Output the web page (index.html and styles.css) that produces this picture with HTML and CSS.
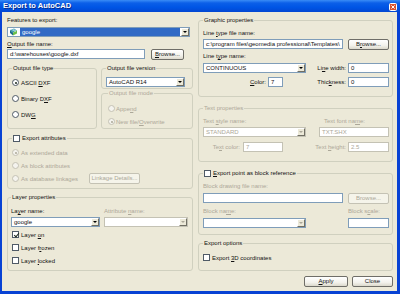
FILE: index.html
```html
<!DOCTYPE html>
<html lang="en">
<head>
    <meta charset="UTF-8">
    <title>AutoCAD export dialog</title>
    <link rel="stylesheet" href="styles.css">
</head>
<body>
<div class="window">
    <div class="titlebar">
        <span class="caption">Export to AutoCAD</span>
        <svg class="close-btn" width="8" height="8" viewBox="0 0 8 8">
            <rect x="0.5" y="0.5" width="7" height="7" rx="1" fill="#D8522F" stroke="#fff"/>
            <path d="M2.4 2.4 L5.6 5.6 M5.6 2.4 L2.4 5.6" stroke="#fff" stroke-width="1"/>
        </svg>
    </div>

    <div class="client">
        <div class="columns">
            <!-- Left column -->
            <div class="col-left">
                <span class="lbl">Features to export:</span>
                <div class="combo mt3">
                    <svg class="feat-icon" width="9" height="8" viewBox="0 0 9 8">
                        <path d="M1 2 L5 0.5 L8 2.5 L4 4.5 Z" fill="#3A9FB0"/>
                        <path d="M1 2 L4 4.5 L4 7.5 L1 5 Z" fill="#1F6C8C"/>
                        <path d="M4 4.5 L8 2.5 L8 5.5 L4 7.5 Z" fill="#6CC04A"/>
                        <path d="M2.5 1.5 L6.5 3.5 M4 1 L7 3" stroke="#fff" stroke-width="0.5"/>
                    </svg>
                    <span class="combo-text selected">google</span>
                    <span class="drop"></span>
                </div>

                <span class="lbl mt4"><u>O</u>utput file name:</span>
                <div class="row mt1">
                    <span class="edit w138">d:\warehouses\google.dxf</span>
                    <span class="btn w33"><u>B</u>rowse...</span>
                </div>

                <div class="group-row">
                    <fieldset class="group type-group">
                        <legend>Output file type</legend>
                        <div class="opt mt7"><span class="radio checked"></span><span>ASCII <u>D</u>XF</span></div>
                        <div class="opt mt9"><span class="radio"></span><span>Binary D<u>X</u>F</span></div>
                        <div class="opt mt9"><span class="radio"></span><span>DW<u>G</u></span></div>
                    </fieldset>
                    <div class="group-stack">
                        <fieldset class="group version-group">
                            <legend>Output file version</legend>
                            <div class="combo w79">
                                <span class="combo-text">AutoCAD R14</span>
                                <span class="drop"></span>
                            </div>
                        </fieldset>
                        <fieldset class="group mode-group disabled">
                            <legend>Output file mode</legend>
                            <div class="opt mt8"><span class="radio"></span><span>Appe<u>n</u>d</span></div>
                            <div class="opt mt6"><span class="radio checked"></span><span>New file/<u>O</u>verwrite</span></div>
                        </fieldset>
                    </div>
                </div>

                <fieldset class="group attr-group">
                    <legend><span class="check"></span><span>Export attributes</span></legend>
                    <div class="opt disabled mt7"><span class="radio checked"></span><span>As extended data</span></div>
                    <div class="opt disabled mt6"><span class="radio"></span><span>As block attributes</span></div>
                    <div class="opt disabled mt6">
                        <span class="opt-main"><span class="radio"></span><span>As database linkages</span></span>
                        <span class="btn w51 off">Linkage Details...</span>
                    </div>
                </fieldset>

                <fieldset class="group layer-group">
                    <legend>Layer properties</legend>
                    <div class="layer-grid mt7">
                        <span class="lbl">La<u>y</u>er name:</span>
                        <span class="lbl off">Attribute <u>n</u>ame:</span>
                    </div>
                    <div class="layer-grid mt2">
                        <div class="combo">
                            <span class="combo-text">google</span>
                            <span class="drop"></span>
                        </div>
                        <div class="combo off">
                            <span class="combo-text"></span>
                            <span class="drop"></span>
                        </div>
                    </div>
                    <div class="opt ml1 mt4"><span class="check checked"></span><span>Layer <u>o</u>n</span></div>
                    <div class="opt ml1 mt6"><span class="check"></span><span>Layer f<u>r</u>ozen</span></div>
                    <div class="opt ml1 mt6"><span class="check"></span><span>Layer <u>l</u>ocked</span></div>
                </fieldset>
            </div>

            <!-- Right column -->
            <div class="col-right">
                <fieldset class="group graphic-group">
                    <legend>Graphic properties</legend>
                    <span class="lbl mt6">Line <u>t</u>ype file name:</span>
                    <div class="row spread mt2">
                        <span class="edit w140">c:\program files\geomedia professional\Templates\</span>
                        <span class="btn w41">B<u>r</u>owse...</span>
                    </div>
                    <span class="lbl mt3">Line t<u>y</u>pe name:</span>
                    <div class="row mt3">
                        <div class="combo w103">
                            <span class="combo-text">CONTINUOUS</span>
                            <span class="drop"></span>
                        </div>
                        <span class="side-lbl">Li<u>n</u>e width:</span>
                        <span class="edit w41">0</span>
                    </div>
                    <div class="row mt4">
                        <span class="side-lbl w65"><u>C</u>olor:</span>
                        <span class="edit w15">7</span>
                        <span class="side-lbl">Thic<u>k</u>ness:</span>
                        <span class="edit w41">0</span>
                    </div>
                </fieldset>

                <fieldset class="group text-group disabled">
                    <legend>Text properties</legend>
                    <div class="text-grid mt6">
                        <span class="lbl">Text <u>s</u>tyle name:</span>
                        <span class="lbl pl5">Text font na<u>m</u>e:</span>
                    </div>
                    <div class="row spread mt2">
                        <div class="combo w103 off">
                            <span class="combo-text">STANDARD</span>
                            <span class="drop"></span>
                        </div>
                        <span class="edit w70 off">TXT.SHX</span>
                    </div>
                    <div class="row mt5">
                        <span class="side-lbl w40">Te<u>x</u>t color:</span>
                        <span class="edit w40 off">7</span>
                        <span class="side-lbl">Text <u>h</u>eight:</span>
                        <span class="edit w41 off">2.5</span>
                    </div>
                </fieldset>

                <fieldset class="group block-group">
                    <legend><span class="check"></span><span><u>E</u>xport point as block reference</span></legend>
                    <span class="lbl off mt6">Block drawing file name:</span>
                    <div class="row spread mt3">
                        <span class="edit w140"></span>
                        <span class="btn w41 off">Browse...</span>
                    </div>
                    <div class="row mt4">
                        <span class="lbl off grow">Block na<u>m</u>e:</span>
                        <span class="lbl off w41">Block s<u>c</u>ale:</span>
                    </div>
                    <div class="row spread mt3">
                        <div class="combo w103">
                            <span class="combo-text"></span>
                            <span class="drop off"></span>
                        </div>
                        <span class="edit w41"></span>
                    </div>
                </fieldset>

                <fieldset class="group options-group">
                    <legend>Export options</legend>
                    <div class="opt mt7"><span class="check"></span><span>Export <u>3</u>D coordinates</span></div>
                </fieldset>
            </div>
        </div>

        <div class="actions">
            <span class="btn w44"><u>A</u>pply</span>
            <span class="btn w41">Close</span>
        </div>
    </div>
</div>
</body>
</html>
```

FILE: styles.css
```css
/* Export to AutoCAD dialog, XP look */

* {
    box-sizing: border-box;
}

body {
    margin: 0;
    font-family: "Liberation Sans", Arial, sans-serif;
    font-size: 6px;
    color: #111;
}

.window {
    width: 400px;
    height: 294px;
    background: #0842D4;
    display: flex;
    flex-direction: column;
}

.titlebar {
    height: 12px;
    background: linear-gradient(to bottom, #3A8CF6 0%, #0C5FE8 25%, #0055E5 60%, #0347D2 100%);
    position: relative;
    padding: 1px 0 0 3px;
    text-align: left;
}

.caption {
    display: inline-block;
    color: #fff;
    font-weight: bold;
    font-size: 7.5px;
    line-height: 10px;
    white-space: nowrap;
    text-shadow: 1px 1px 0 #0A2E8C;
}

/* sits over the right end of the title bar */
.close-btn {
    position: absolute;
    right: 3px;
    top: 3px;
}

.client {
    flex: 1;
    margin: 0 3px 3px 2px;
    background: #ECE9D8;
    padding: 5px 4px 0 5px;
}

.columns {
    display: flex;
    gap: 5px;
}

.col-left {
    width: 186px;
    display: flex;
    flex-direction: column;
}

.col-right {
    width: 195px;
    display: flex;
    flex-direction: column;
}

/* text */

.lbl {
    display: block;
    height: 7px;
    line-height: 7px;
    white-space: nowrap;
}

.side-lbl {
    flex: 1;
    text-align: right;
    padding-right: 2px;
    line-height: 10px;
    white-space: nowrap;
}

u {
    text-decoration-thickness: 1px;
    text-underline-offset: 1px;
}

.off,
.disabled legend,
.disabled .opt,
.opt.disabled,
.disabled .side-lbl,
.disabled .lbl {
    color: #ACA899;
}

/* controls */

.row {
    display: flex;
    align-items: flex-start;
}

.row.spread {
    justify-content: space-between;
}

.edit {
    display: block;
    height: 10px;
    line-height: 8px;
    padding-left: 2px;
    border: 1px solid #7F9DB9;
    background: #fff;
    white-space: nowrap;
    overflow: hidden;
}

.edit.off {
    border-color: #C4C2B4;
}

.combo {
    display: flex;
    height: 10px;
    border: 1px solid #7F9DB9;
    background: #fff;
    line-height: 8px;
}

.combo.off {
    border-color: #C4C2B4;
}

.combo-text {
    flex: 1;
    padding-left: 2px;
    white-space: nowrap;
    overflow: hidden;
}

.combo-text.selected {
    background: #316AC5;
    color: #fff;
    margin-right: 1px;
}

.feat-icon {
    flex: none;
    margin: 0 2px 0 1px;
}

.drop {
    flex: none;
    width: 8px;
    height: 8px;
    background: #ECE9D8;
    border: 1px solid;
    border-color: #fff #716F64 #716F64 #fff;
    position: relative;
}

.drop::after {
    content: "";
    position: absolute;
    left: 1px;
    top: 2px;
    border-left: 2px solid transparent;
    border-right: 2px solid transparent;
    border-top: 2px solid #000;
}

.off .drop::after,
.drop.off::after {
    border-top-color: #ACA899;
}

.btn {
    display: block;
    height: 11px;
    line-height: 9px;
    text-align: center;
    border: 1px solid #6F6E68;
    border-radius: 2px;
    background: linear-gradient(to bottom, #FFFFFF 0%, #F3F2EC 60%, #DCD9CC 100%);
    white-space: nowrap;
}

.btn.off {
    color: #ACA899;
    border-color: #C4C2B4;
    background: #F5F4EA;
}

/* group boxes */

.group {
    margin: 0;
    padding: 0 3px 0 4px;
    border: 1px solid #D0D0BF;
    border-radius: 3px;
    min-width: 0;
}

.group legend {
    padding: 0 1px;
    height: 7px;
    line-height: 7px;
    display: flex;
    align-items: center;
    white-space: nowrap;
}

.group-row {
    display: flex;
    gap: 4px;
    margin-top: 5px;
}

.type-group {
    width: 90px;
    padding-bottom: 3px;
}

.group-stack {
    width: 92px;
    display: flex;
    flex-direction: column;
}

.version-group {
    padding-top: 5px;
    padding-bottom: 1px;
}

.mode-group {
    margin-top: 1px;
    padding-left: 6px;
    padding-bottom: 3px;
}

.attr-group {
    margin-top: 6px;
    padding-bottom: 6px;
}

.layer-group {
    margin-top: 5px;
    padding-left: 3px;
    padding-bottom: 6px;
}

.layer-grid {
    display: grid;
    grid-template-columns: 89px 84px;
    gap: 4px;
}

.graphic-group {
    padding-bottom: 9px;
}

.text-group {
    margin-top: 8px;
    padding-bottom: 9px;
}

.text-grid {
    display: grid;
    grid-template-columns: 116px 70px;
}

.block-group {
    margin-top: 8px;
    padding-bottom: 6px;
}

.options-group {
    margin-top: 5px;
    padding-bottom: 9px;
}

/* radio and check boxes */

.opt {
    display: flex;
    align-items: center;
    height: 7px;
    white-space: nowrap;
}

.opt-main {
    display: flex;
    align-items: center;
    width: 77px;
}

.radio,
.check {
    flex: none;
    width: 7px;
    height: 7px;
    margin-right: 2px;
    border: 1px solid #4F5A66;
    background: #fff;
    position: relative;
}

.mode-group .radio {
    margin-right: 1px;
}

.radio {
    border-radius: 50%;
}

.radio.checked::after {
    content: "";
    position: absolute;
    left: 1.5px;
    top: 1.5px;
    width: 2px;
    height: 2px;
    border-radius: 50%;
    background: #1E2A1E;
}

.check.checked::after {
    content: "";
    position: absolute;
    left: 1.5px;
    top: 0;
    width: 2px;
    height: 4px;
    border: solid #1E2A1E;
    border-width: 0 1px 1px 0;
    transform: rotate(40deg);
}

.disabled .radio,
.opt.disabled .radio {
    border-color: #C4C2B4;
    background: #F4F3EE;
}

.disabled .radio.checked::after,
.opt.disabled .radio.checked::after {
    background: #ACA899;
}

.actions {
    display: flex;
    justify-content: flex-end;
    gap: 4px;
    margin-top: 5px;
}

/* spacing helpers */

.mt1 { margin-top: 1px; }
.mt2 { margin-top: 2px; }
.mt3 { margin-top: 3px; }
.mt4 { margin-top: 4px; }
.mt5 { margin-top: 5px; }
.mt6 { margin-top: 6px; }
.mt7 { margin-top: 7px; }
.mt8 { margin-top: 8px; }
.mt9 { margin-top: 9px; }
.ml1 { margin-left: 1px; }
.pl5 { padding-left: 5px; }
.grow { flex: 1; }

.w15 { width: 15px; }
.w33 { width: 33px; margin-left: 6px; }
.w40 { width: 40px; flex: none; }
.w41 { width: 41px; flex: none; }
.w44 { width: 44px; }
.w51 { width: 51px; }
.w65 { width: 65px; flex: none; }
.w70 { width: 70px; }
.w79 { width: 79px; }
.w103 { width: 103px; flex: none; }
.w138 { width: 138px; }
.w140 { width: 140px; }

.col-left > .combo {
    width: 183px;
}

.side-lbl.w40 {
    padding-right: 3px;
}
```
